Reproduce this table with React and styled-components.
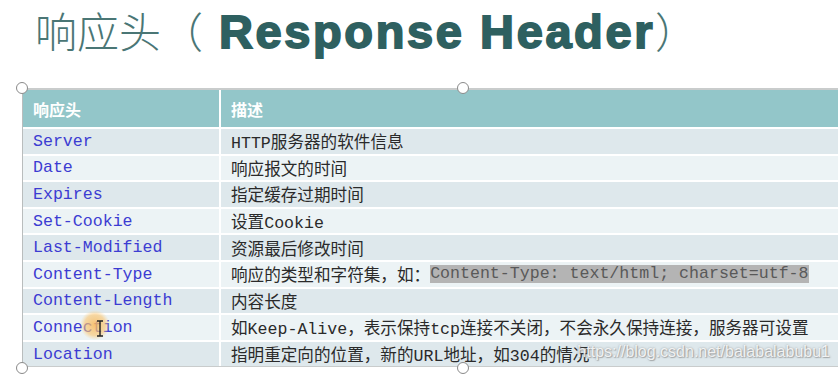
import React from 'react'
import styled, { createGlobalStyle } from 'styled-components'

const GlobalStyle = createGlobalStyle`
  html, body {
    margin: 0;
    padding: 0;
    background: #ffffff;
    overflow: hidden;
  }
`

const rows = [
  { name: 'Server', desc: 'HTTP服务器的软件信息' },
  { name: 'Date', desc: '响应报文的时间' },
  { name: 'Expires', desc: '指定缓存过期时间' },
  { name: 'Set-Cookie', desc: '设置Cookie' },
  { name: 'Last-Modified', desc: '资源最后修改时间' },
  { name: 'Content-Type', desc: '响应的类型和字符集，如：', code: 'Content-Type: text/html; charset=utf-8' },
  { name: 'Content-Length', desc: '内容长度' },
  { name: 'Connection', desc: '如Keep-Alive，表示保持tcp连接不关闭，不会永久保持连接，服务器可设置' },
  { name: 'Location', desc: '指明重定向的位置，新的URL地址，如304的情况' },
]

export default function App() {
  return (
    <Page>
      <GlobalStyle />
      <Title>
        <Cjk>响应头（</Cjk>
        <English>Response Header</English>
        <Cjk>）</Cjk>
      </Title>
      <Table>
        <HeadCell>响应头</HeadCell>
        <HeadCell>描述</HeadCell>
        {rows.map((r, i) => (
          <React.Fragment key={r.name}>
            <NameCell $odd={i % 2 === 0}>{r.name}</NameCell>
            <DescCell $odd={i % 2 === 0}>
              {r.desc}
              {r.code && <Code>{r.code}</Code>}
            </DescCell>
          </React.Fragment>
        ))}
      </Table>
      <Selection>
        <Handle $corner="tl" />
        <Handle $corner="tr" />
        <Handle $corner="bl" />
        <Handle $corner="br" />
      </Selection>
      <Pointer>
        <svg width="32" height="32" viewBox="0 0 32 32">
          <defs>
            <radialGradient id="glow">
              <stop offset="0%" stopColor="rgba(248,184,90,0.85)" />
              <stop offset="70%" stopColor="rgba(250,196,110,0.6)" />
              <stop offset="100%" stopColor="rgba(250,210,140,0)" />
            </radialGradient>
          </defs>
          <circle cx="15" cy="15" r="15" fill="url(#glow)" />
          <path d="M17 11 h6 M20 11 v15 M17 26 h6" stroke="#222" strokeWidth="1.4" fill="none" />
        </svg>
      </Pointer>
      <Watermark>https://blog.csdn.net/balabalabubu1</Watermark>
    </Page>
  )
}

const Page = styled.div`
  position: relative;
  width: 838px;
  height: 375px;
  overflow: hidden;
  background: #fff;
`

const Title = styled.h1`
  margin: 0;
  height: 88px;
  padding-left: 35px;
  display: flex;
  align-items: baseline;
  line-height: 60px;
  white-space: nowrap;
`

const Cjk = styled.span`
  font-family: "Noto Sans CJK SC", sans-serif;
  font-weight: 300;
  font-size: 42px;
  color: #4a7675;
`

const English = styled.span`
  font-family: "Liberation Sans", Arial, sans-serif;
  font-weight: 700;
  font-size: 47px;
  letter-spacing: 2.6px;
  color: #2e6060;
  -webkit-text-stroke: 1.8px #2e6060;
  margin-left: 16px;
  margin-right: 0;
`

const Table = styled.div`
  margin-left: 22px;
  width: 830px;
  display: grid;
  grid-template-columns: 196px 1fr;
  grid-auto-rows: 24.6px;
  grid-template-rows: 37px;
  gap: 2px;
  background: #ffffff;
  border-top: 2px solid #c9cccc;
  border-left: 1px solid #b9bdbd;
  border-bottom: 1px solid #c9cccc;
`

const HeadCell = styled.div`
  background: #93c6c9;
  color: #ffffff;
  font-family: "Noto Sans CJK SC", sans-serif;
  font-weight: 700;
  font-size: 16px;
  display: flex;
  align-items: center;
  padding-left: 10px;
`

const BodyCell = styled.div`
  background: ${p => (p.$odd ? '#dee8ec' : '#ecf3f5')};
  font-family: "Liberation Mono", "Noto Sans CJK SC", monospace;
  font-size: 16.6px;
  display: flex;
  align-items: center;
  padding-left: 10px;
  white-space: nowrap;
`

const NameCell = styled(BodyCell)`
  color: #3c3cd2;
`

const DescCell = styled(BodyCell)`
  color: #2a2a2a;
`

const Code = styled.span`
  background: #b4b4b4;
  color: #595959;
  line-height: 18px;
`

const Selection = styled.div`
  position: absolute;
  left: 22px;
  top: 88px;
  width: 441px;
  height: 280px;
  pointer-events: none;
`

const Handle = styled.div`
  position: absolute;
  width: 10px;
  height: 10px;
  border-radius: 50%;
  background: #ffffff;
  border: 1px solid #8a8a8a;
  ${p => (p.$corner[0] === 't' ? 'top: -6px;' : 'bottom: -6px;')}
  ${p => (p.$corner[1] === 'l' ? 'left: -6px;' : 'right: -6px;')}
`

const Pointer = styled.div`
  position: absolute;
  left: 80px;
  top: 310px;
  width: 32px;
  height: 32px;
`

const Watermark = styled.div`
  position: absolute;
  right: 8px;
  top: 343px;
  font-family: "Liberation Sans", Arial, sans-serif;
  font-size: 16px;
  color: rgba(255, 255, 255, 0.85);
  text-shadow: 0 0 2px rgba(120, 120, 120, 0.7), 1px 1px 1px rgba(140, 140, 140, 0.6);
`
